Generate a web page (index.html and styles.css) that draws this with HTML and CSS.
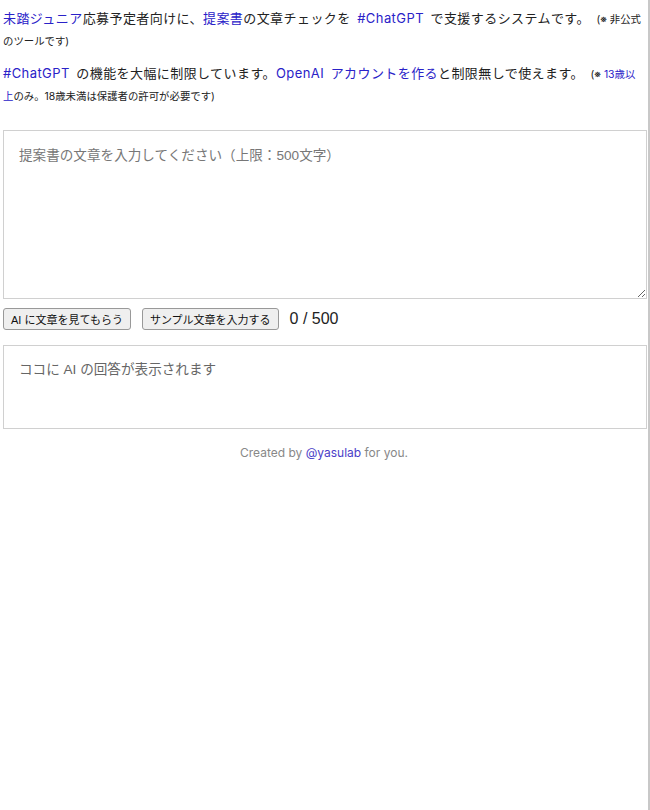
FILE: index.html
```html
<!DOCTYPE html>
<html lang="ja">
<head>
<meta charset="utf-8">
<title>提案書チェック</title>
<link rel="stylesheet" href="styles.css">
</head>
<body>
<main class="page">
  <p class="intro"><a href="#">未踏ジュニア</a>応募予定者向けに、<a href="#">提案書</a>の文章チェックを <a href="#">#ChatGPT</a> で支援するシステムです。 <small class="note">(※ 非公式のツールです)</small></p>
  <p class="intro"><a href="#">#ChatGPT</a> の機能を大幅に制限しています。<a href="#">OpenAI アカウントを作る</a>と制限無しで使えます。 <small class="note">(※ <a href="#">13歳以上</a>のみ。18歳未満は保護者の許可が必要です)</small></p>
  <textarea class="input" placeholder="提案書の文章を入力してください（上限：500文字）"></textarea>
  <div class="controls">
    <button class="btn">AI に文章を見てもらう</button>
    <button class="btn">サンプル文章を入力する</button>
    <span class="count">0 / 500</span>
  </div>
  <div class="output">ココに AI の回答が表示されます</div>
  <p class="footer">Created by <a href="#">@yasulab</a> for you.</p>
</main>
</body>
</html>
```
FILE: styles.css
```css
html, body {
  margin: 0;
  background: #fff;
}
body {
  font-family: Inter, "Noto Sans CJK JP", sans-serif;
  color: #222;
  border-right: 2px solid #c8c8c8;
  min-height: 810px;
  box-sizing: border-box;
  width: 650px;
}
.page {
  padding: 7px 3px 0 3px;
}
a {
  color: #2a22c8;
  text-decoration: none;
}
.intro {
  margin: 0 0 11px 0;
  font-size: 13px;
  line-height: 22px;
  letter-spacing: 0.42px;
  word-spacing: 2.5px;
}
.note {
  font-size: 10.4px;
  line-height: 1;
  letter-spacing: 0;
  word-spacing: 0;
  color: #222;
}
.input {
  display: block;
  width: 644px;
  height: 169px;
  box-sizing: border-box;
  margin: 24px 0 0 0;
  padding: 13px 15px;
  border: 1px solid #d0d0d0;
  border-radius: 0;
  font-family: "Liberation Sans", "Noto Sans CJK JP", sans-serif;
  font-size: 13.6px;
  color: #333;
  resize: vertical;
  outline: none;
}
.input::placeholder {
  color: #777;
}
.controls {
  display: flex;
  align-items: center;
  gap: 11px;
  margin-top: 9px;
}
.btn {
  font-family: "Liberation Sans", "Noto Sans CJK JP", sans-serif;
  font-size: 11px;
  height: 22px;
  padding: 0 7px;
  background: #efefef;
  border: 1px solid #999;
  border-radius: 3px;
  color: #111;
}
.count {
  font-family: "Liberation Sans", sans-serif;
  font-size: 16px;
  color: #222;
}
.output {
  margin-top: 15px;
  width: 644px;
  height: 84px;
  box-sizing: border-box;
  border: 1px solid #d0d0d0;
  padding: 14px 15px;
  font-family: "Liberation Sans", "Noto Sans CJK JP", sans-serif;
  font-size: 13.6px;
  line-height: 20px;
  color: #666;
}
.footer {
  margin: 16px 0 0 0;
  text-align: center;
  font-size: 12px;
  color: #888;
}
.footer a {
  color: #4a40c8;
}
```
